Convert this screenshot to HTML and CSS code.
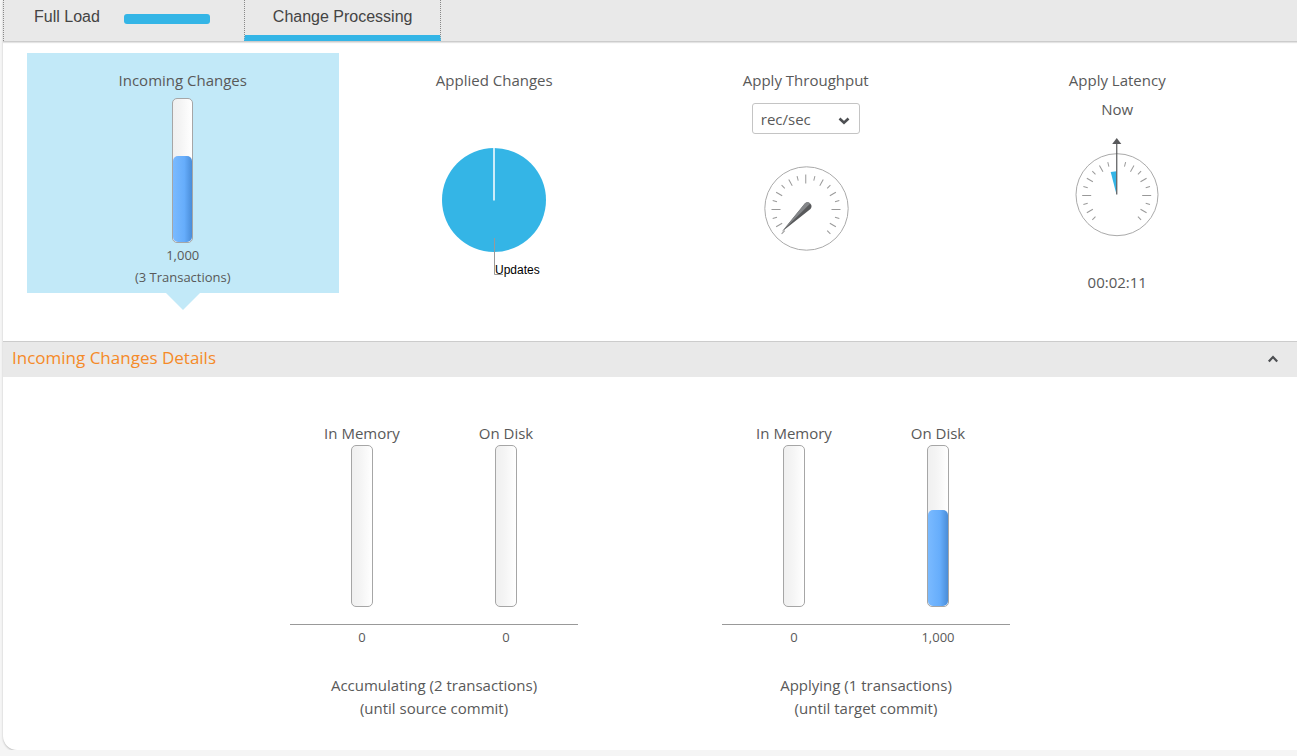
FILE: index.html
```
<!DOCTYPE html>
<html lang="en">
<head>
<meta charset="utf-8">
<title>Change Processing</title>
<link rel="stylesheet" href="styles.css">
</head>
<body>
<main class="panel">
  <div class="tabs" role="tablist">
    <button class="tab" role="tab" aria-selected="false">Full Load<span class="load-bar"></span></button>
    <button class="tab tab-active" role="tab" aria-selected="true">Change Processing</button>
  </div>

  <div class="summary">
    <section class="card card-selected">
      <h2 class="label">Incoming Changes</h2>
      <div class="tube tube-small"><div class="fill" style="height:60%"></div></div>
      <div class="small">1,000</div>
      <div class="small">(3 Transactions)</div>
    </section>

    <section class="card">
      <h2 class="label">Applied Changes</h2>
      <svg class="pie" width="120" height="132" viewBox="0 0 120 132">
        <circle cx="60" cy="54" r="52" fill="#34b5e6"/>
        <path d="M60 2V54.500" stroke="#fff" stroke-width="1.500"/>
        <path d="M60.500 92V128.500H69" fill="none" stroke="#999" stroke-width="1"/>
        <text class="pie-text" x="61" y="128">Updates</text>
      </svg>
    </section>

    <section class="card">
      <h2 class="label">Apply Throughput</h2>
      <div class="picker">
        <select class="select" aria-label="Throughput unit"><option>rec/sec</option></select>
        <svg class="picker-arrow" width="12" height="8" viewBox="0 0 12 8"><path d="M1.500 1.500L6 5.800L10.500 1.500" fill="none" stroke="#4d4f52" stroke-width="2.600"/></svg>
      </div>
      <svg class="gauge" width="90" height="90" viewBox="0 0 90 90">
        <defs>
          <g id="side" stroke="#999" stroke-width="1">
            <path d="M25.500 0H34.500"/>
            <path d="M30 0H34.500" transform="rotate(15)"/>
            <path d="M27.500 0H34.500" transform="rotate(-30)"/>
            <path d="M30 0H34.500" transform="rotate(-15)"/>
            <path d="M27.500 0H34.500" transform="rotate(30)"/>
            <path d="M30 0H34.500" transform="rotate(45)"/>
            <path d="M30 0H34.500" transform="rotate(-45)"/>
            <path d="M27.500 0H34.500" transform="rotate(-60)"/>
            <path d="M30 0H34.500" transform="rotate(-75)"/>
          </g>
        </defs>
        <circle cx="45.500" cy="44.500" r="41.700" fill="#fff" stroke="#aaa"/>
        <use href="#side" transform="translate(45 45.500)"/>
        <use href="#side" transform="translate(45 45.500) scale(-1 1)"/>
        <path d="M44.750 10.500V19.500" stroke="#999"/>
        <path d="M20.800 67.800L43.800 39.600A3.900 3.900 0 0 1 49.500 44.900Z" fill="#58595b"/>
        <path d="M20.800 67.800L43.800 39.600A3.900 3.900 0 0 1 49.300 39.600Z" fill="#85878a"/>
      </svg>
    </section>

    <section class="card">
      <h2 class="label">Apply Latency</h2>
      <div class="label now">Now</div>
      <svg class="clock" width="90" height="104" viewBox="0 0 90 104">
        <circle cx="45" cy="58.700" r="41" fill="#fff" stroke="#aaa"/>
        <use href="#side" transform="translate(44.700 59.500)"/>
        <use href="#side" transform="translate(44.700 59.500) scale(-1 1)"/>
        <path d="M38.700 36L44.500 35.300V58.500Z" fill="#34b5e6"/>
        <path d="M44.750 58.500V6" stroke="#58595b" stroke-width="1.200"/>
        <path d="M40.200 8L44.750 2L49.300 8Z" fill="#58595b"/>
      </svg>
      <div class="label time">00:02:11</div>
    </section>
  </div>

  <div class="details-head">
    <h2 class="details-title">Incoming Changes Details</h2>
    <button class="collapse" aria-label="Collapse details">
      <svg width="12" height="10" viewBox="0 0 12 10"><path d="M1.800 7.500L6 3L10.200 7.500" fill="none" stroke="#4d4f52" stroke-width="2.200"/></svg>
    </button>
  </div>

  <div class="details">
    <section class="group">
      <div class="tubes">
        <div class="column"><div class="label">In Memory</div><div class="tube"></div></div>
        <div class="column"><div class="label">On Disk</div><div class="tube"></div></div>
      </div>
      <div class="values"><div class="small">0</div><div class="small">0</div></div>
      <p class="caption">Accumulating (2 transactions)<br>(until source commit)</p>
    </section>
    <section class="group">
      <div class="tubes">
        <div class="column"><div class="label">In Memory</div><div class="tube"></div></div>
        <div class="column"><div class="label">On Disk</div><div class="tube"><div class="fill" style="height:60%"></div></div></div>
      </div>
      <div class="values"><div class="small">0</div><div class="small">1,000</div></div>
      <p class="caption">Applying (1 transactions)<br>(until target commit)</p>
    </section>
  </div>
</main>
</body>
</html>
```
FILE: styles.css
```
* { box-sizing: border-box; }
body {
  margin: 0;
  padding-left: 3px;
  background: #f5f5f5;
  color: #595959;
  font-family: "Open Sans", "Noto Sans", sans-serif;
  font-size: 15px;
  line-height: 22px;
}
h2, p { margin: 0; font-weight: 400; }
svg { display: block; }
button { border: 0; margin: 0; background: none; cursor: pointer; }

.panel {
  background: #fff;
  border-radius: 0 0 0 14px;
  box-shadow: 0 1px 2px #bbb;
}

.tabs {
  display: flex;
  height: 42px;
  background: #e9e9e9;
  border-bottom: 1px solid #ccc;
  box-shadow: 0 1px 1px #e4e4e4;
}
.tab {
  display: flex;
  align-items: center;
  gap: 24px;
  padding: 0 34px 8px 30px;
  border-left: 1px dotted #888;
  color: #444;
  font: 16px/22px "Liberation Sans", Arial, sans-serif;
}
.tab-active {
  padding: 0 28px 2px;
  border-right: 1px dotted #888;
  border-bottom: 6px solid #34b5e6;
}
.load-bar {
  width: 86px;
  height: 10px;
  margin-top: 4px;
  border-radius: 3px;
  background: #34b5e6;
}

.summary {
  display: grid;
  grid-template-columns: repeat(4, 1fr);
  padding: 11px 24px 48px;
}
.card {
  display: flex;
  flex-direction: column;
  align-items: center;
  padding-top: 16px;
}
.card-selected { position: relative; background: #c2e9f8; }
.card-selected::after {
  content: "";
  position: absolute;
  top: 100%;
  left: 50%;
  margin-left: -17px;
  border: 17px solid transparent;
  border-top-color: #c2e9f8;
  border-bottom: 0;
}
.label { font-size: 15px; line-height: 22px; text-align: center; }
.small { font-size: 13px; line-height: 22px; text-align: center; }

.tube {
  display: flex;
  align-items: flex-end;
  width: 22px;
  height: 162px;
  border: 1px solid #a6a6a6;
  border-radius: 5px;
  background: linear-gradient(90deg, #f0f0f0, #f4f4f4 40%, #fff);
}
.tube-small { width: 21px; height: 145px; margin: 7px 0 1px; }
.fill {
  width: 100%;
  border-radius: 5px;
  background: linear-gradient(90deg, #7abaff, #66adfb 60%, #4a8dd8);
}

.pie { margin-top: 55px; }
.pie-text { font: 12px "Liberation Sans", Arial, sans-serif; fill: #000; }
.picker { position: relative; margin-top: 12px; }
.select {
  display: block;
  width: 108px;
  height: 31px;
  padding: 0 8px;
  appearance: none;
  border: 1px solid #c4c4c4;
  border-radius: 3px;
  background: #fff;
  color: #595959;
  font: inherit;
}
.picker-arrow { position: absolute; right: 10px; top: 14px; pointer-events: none; }
.gauge { margin-top: 30px; }
.now { margin-top: 7px; }
.clock { margin-top: 16px; }
.time { margin-top: 31px; }

.details-head {
  display: flex;
  justify-content: space-between;
  align-items: center;
  height: 36px;
  padding: 0 16px 4px 9px;
  border-top: 1px solid #ccc;
  background: #e9e9e9;
}
.details-title { color: #f58a28; font-size: 17px; line-height: 24px; }
.collapse { padding: 2px 2px 0; }

.details {
  display: flex;
  justify-content: center;
  gap: 144px;
  padding: 45px 24px 30px;
}
.group { width: 288px; }
.tubes, .values { display: grid; grid-template-columns: 1fr 1fr; }
.tubes { padding-bottom: 17px; border-bottom: 1px solid #999; }
.column { display: flex; flex-direction: column; align-items: center; gap: 1px; }
.values { padding-top: 1px; }
.caption { margin-top: 26px; line-height: 23px; text-align: center; }
```
